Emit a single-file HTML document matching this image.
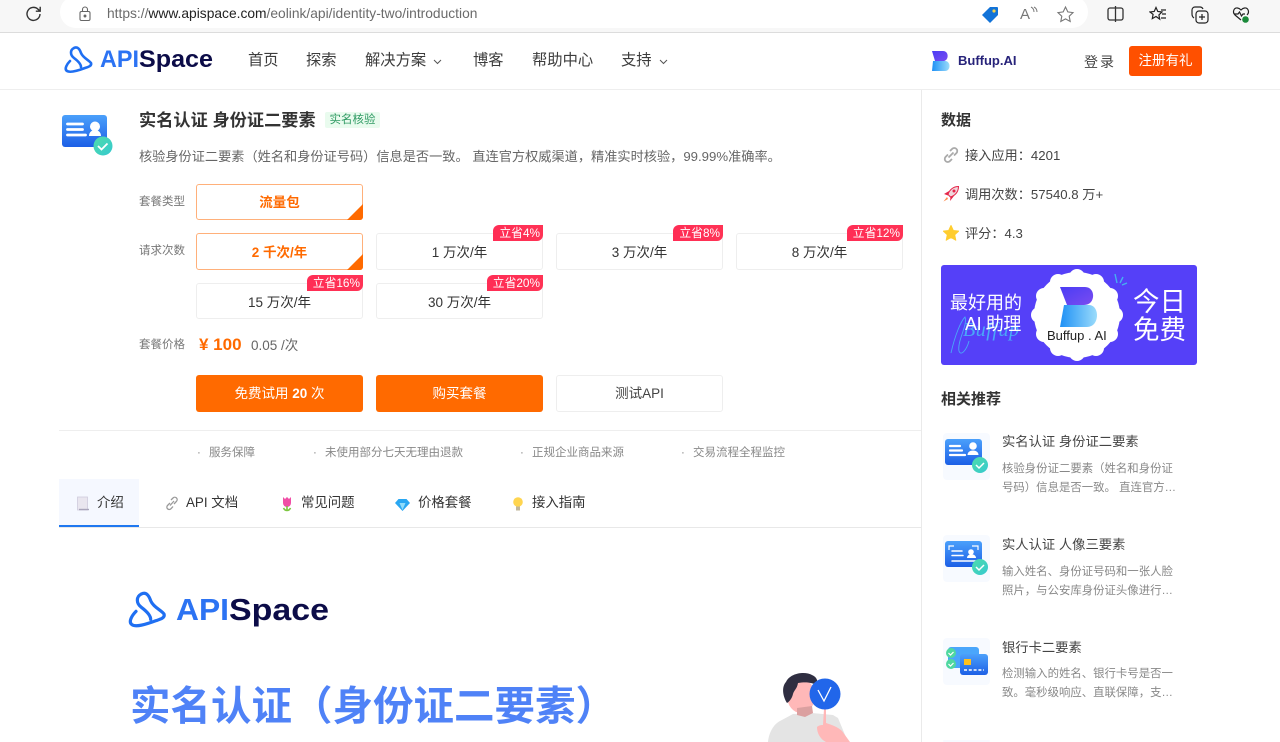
<!DOCTYPE html>
<html lang="zh-CN"><head><meta charset="utf-8"><title>APISpace</title>
<style>
html,body{margin:0;padding:0;background:#fff;height:742px;overflow:hidden}
body{width:1280px;position:relative;font-family:"Liberation Sans","Noto Sans CJK SC",sans-serif;color:#333}
.a,.t,.o,.b,.bd,svg{position:absolute}
.t{white-space:nowrap;line-height:20px}
.nav{font-size:15.3px;color:#3c3c3c;top:51px}
.lab{font-size:11.5px;color:#777;left:139px}
.o{box-sizing:border-box;width:167px;height:37px;border:1px solid #eee;border-radius:3px;text-align:center;font-size:13.5px;line-height:37px;color:#333;background:#fff}
.o.s{border-color:#ffb07a;color:#ff6a00;font-weight:bold}
.o.s:after{content:"";position:absolute;right:-1px;bottom:-1px;border-style:solid;border-width:0 0 16px 16px;border-color:transparent transparent #ff6a00 transparent;border-bottom-right-radius:3px}
.bd{right:-1px;top:-9px;height:16px;line-height:16px;padding:0 3px 0 6px;font-size:11.8px;font-weight:normal;color:#fff;background:linear-gradient(90deg,#ff2d55,#ff3355);border-radius:6px 0 6px 0}
.b{box-sizing:border-box;top:375px;width:167px;height:37px;border-radius:3px;text-align:center;font-size:13.5px;line-height:37px;background:#ff6a00;color:#fff}
.sv{font-size:11.5px;color:#888;top:443px}
.tab{font-size:13.4px;color:#333;top:493px}
.st{font-size:13.2px;color:#444;left:965px}
.ct{font-size:13.3px;color:#444;left:1002px}
.cd{font-size:11.4px;color:#888;left:1002px}
.ib{position:absolute;left:943px;width:47px;height:47px;background:#f7faff;border-radius:4px}
</style></head><body>

<!-- browser chrome -->
<div class="a" style="left:0;top:0;width:1280px;height:32px;background:#f7f7f7;border-bottom:1px solid #dcdcdc"></div>
<div class="a" style="left:60px;top:-4px;width:1028px;height:32px;background:#fff;border-radius:16px"></div>
<svg style="left:24px;top:4px" width="20" height="20" viewBox="0 0 20 20" fill="none" stroke="#333" stroke-width="1.4"><path d="M16 10a6.5 6.5 0 1 1-2-4.8L16 7"/><path d="M16.2 2.800V7.200H11.800"/></svg>
<svg style="left:78px;top:6px" width="14" height="16" viewBox="0 0 14 16" fill="none" stroke="#666" stroke-width="1.1"><rect x="2" y="5.500" width="10" height="9" rx="1.500"/><path d="M4.500 5.500V3.500a2.500 2.500 0 0 1 5 0v2"/><circle cx="7" cy="10" r=".9" fill="#666"/></svg>
<div class="t" style="left:107px;top:4px;font-size:13.8px;color:#6b6b6b">https://<span style="color:#222">www.apispace.com</span>/eolink/api/identity-two/introduction</div>
<svg style="left:981px;top:6px" width="18" height="18" viewBox="0 0 18 18"><path d="M9 1h7a1 1 0 0 1 1 1v7l-8 8-8-8z" fill="#1273d8"/><circle cx="13" cy="5" r="1.600" fill="#f6d24a"/></svg>
<div class="t" style="left:1020px;top:5px;font-size:15px;color:#777">A</div>
<svg style="left:1030px;top:6px" width="8" height="10" viewBox="0 0 8 10" fill="none" stroke="#777"><path d="M1 1c2 1 3 3 3 5M4 1c2 1 3 3 3 5"/></svg>
<svg style="left:1056px;top:5px" width="19" height="19" viewBox="0 0 19 19" fill="none" stroke="#777" stroke-width="1.1"><path d="M9.500 2l2.300 4.900 5.200.7-3.800 3.600 1 5.300-4.700-2.600-4.700 2.600 1-5.300L2 7.600l5.200-.7z"/></svg>
<svg style="left:1107px;top:6px" width="17" height="16" viewBox="0 0 17 16" fill="none" stroke="#333" stroke-width="1.300"><rect x="1" y="2" width="15" height="12" rx="2"/><path d="M8.500 0v16"/></svg>
<svg style="left:1149px;top:6px" width="18" height="17" viewBox="0 0 18 17" fill="none" stroke="#222" stroke-width="1.200"><path d="M7 1.500l1.800 4 4.200.5-3.100 2.900.8 4.200L7 10.500l-3.700 2.100.8-4.200L1 6l4.200-.5z"/><path d="M12 4h5M13 8h4M12 12h5"/></svg>
<svg style="left:1191px;top:6px" width="18" height="18" viewBox="0 0 18 18" fill="none" stroke="#222" stroke-width="1.200"><rect x="5" y="5" width="12" height="12" rx="3"/><path d="M11 8v6M8 11h6M3 12C1.500 11 1 10 1 8V4a3 3 0 0 1 3-3h5c1.500 0 2.500 1 3 2"/></svg>
<svg style="left:1232px;top:6px" width="18" height="18" viewBox="0 0 18 18" fill="none" stroke="#222" stroke-width="1.200"><path d="M9 14L3 9C0 6 2 1.500 5.500 2 7 2.200 8 3 9 4c1-1 2-1.800 3.500-2 3.500-.5 5.500 4 2.500 7"/><path d="M2 8h4l1.500-2 2 4 1.500-2h2"/><circle cx="13.500" cy="13.500" r="3.300" fill="#1b8a3a" stroke="none"/></svg>

<!-- header -->
<div class="a" style="left:0;top:89px;width:1280px;height:1px;background:#eee"></div>
<svg style="left:64px;top:45px" width="30" height="30" viewBox="0 0 30 30" fill="none" stroke="#1f6ff2" stroke-width="2.600" stroke-linecap="round" stroke-linejoin="round"><path d="M10 3C14 1 16 5 17 8C19 13 25 15 27 18C28 21 24 22 21 23C13 26 6 28 3 26C0 24 3 19 6 16"/><path d="M10 3C6 5 6 10 10 13C14 16 17 19 17 22"/></svg>
<svg style="left:98px;top:42px" width="120" height="36"><text x="2" y="25" font-family="Liberation Sans" font-weight="bold" font-size="24" textLength="39" lengthAdjust="spacingAndGlyphs" fill="#2c73f3">API</text><text x="41" y="25" font-family="Liberation Sans" font-weight="bold" font-size="24" textLength="74" lengthAdjust="spacingAndGlyphs" fill="#0c0c48">Space</text></svg>
<div class="t nav" style="left:248px">首页</div>
<div class="t nav" style="left:306px">探索</div>
<div class="t nav" style="left:365px">解决方案</div>
<svg style="left:433px;top:59px" width="9" height="6" fill="none" stroke="#555" stroke-width="1"><path d="M1 1l3.500 3.500L8 1"/></svg>
<div class="t nav" style="left:473px">博客</div>
<div class="t nav" style="left:532px">帮助中心</div>
<div class="t nav" style="left:621px">支持</div>
<svg style="left:659px;top:59px" width="9" height="6" fill="none" stroke="#555" stroke-width="1"><path d="M1 1l3.500 3.500L8 1"/></svg>
<svg style="left:931px;top:50px" width="20" height="22" viewBox="0 0 20 22"><defs><linearGradient id="g1" x1="0" y1="0" x2="1" y2="1"><stop offset="0" stop-color="#4a3cf5"/><stop offset="1" stop-color="#7a4cf0"/></linearGradient><linearGradient id="g2" x1="0" y1="0" x2="1" y2="0"><stop offset="0" stop-color="#1e90f5"/><stop offset="1" stop-color="#9bdcfb"/></linearGradient></defs><path d="M2 11H14c6 0 6 10 0 10H1z" fill="url(#g2)"/><path d="M1 1H12c6 0 6 9 1 10H4z" fill="url(#g1)"/></svg>
<div class="t" style="left:958px;top:51px;font-size:13px;font-weight:bold;color:#27237a">Buffup.AI</div>
<div class="t" style="left:1084px;top:52px;font-size:14px;letter-spacing:2px;color:#444">登录</div>
<div class="a" style="left:1129px;top:46px;width:73px;height:30px;background:#ff5000;border-radius:3px;color:#fff;font-size:13.500px;line-height:30px;text-align:center">注册有礼</div>

<!-- main head -->
<svg style="left:60px;top:113px" width="54" height="44" viewBox="0 0 54 44"><defs><linearGradient id="g3" x1="0" y1="0" x2="0" y2="1"><stop offset="0" stop-color="#4ba0fb"/><stop offset="1" stop-color="#1c5fe6"/></linearGradient><linearGradient id="g4" x1="0" y1="0" x2="1" y2="1"><stop offset="0" stop-color="#4fdcaa"/><stop offset="1" stop-color="#35c9d0"/></linearGradient></defs><rect x="2" y="2" width="45" height="32" rx="3" fill="url(#g3)"/><path d="M7.500 11h15M7.500 16.500h15M7.500 22h18" stroke="#fff" stroke-width="2.800" stroke-linecap="round"/><circle cx="35" cy="13.500" r="5" fill="#fff"/><path d="M29 23c0-8 12-8 12 0z" fill="#fff"/><circle cx="43" cy="33" r="9.500" fill="url(#g4)"/><path d="M38 33l3.500 3.500 6-6" fill="none" stroke="#fff" stroke-width="1.800"/></svg>
<div class="t" style="left:139px;top:110px;font-size:17.2px;font-weight:bold;color:#333">实名认证 身份证二要素</div>
<div class="a" style="left:325px;top:112px;width:55px;height:16px;background:#e9fbee;border-radius:2px;color:#2f9a63;font-size:11.500px;line-height:16px;text-align:center">实名核验</div>
<div class="t" style="left:139px;top:147px;font-size:13.2px;color:#666">核验身份证二要素（姓名和身份证号码）信息是否一致。 直连官方权威渠道，精准实时核验，99.99%准确率。</div>

<div class="t lab" style="top:192px">套餐类型</div>
<div class="o s" style="left:196px;top:184px;height:36px;line-height:36px">流量包</div>
<div class="t lab" style="top:241px">请求次数</div>
<div class="o s" style="left:196px;top:233px;line-height:38px">2 千次/年</div>
<div class="o" style="left:376px;top:233px;line-height:38px">1 万次/年<span class="bd">立省4%</span></div>
<div class="o" style="left:556px;top:233px;line-height:38px">3 万次/年<span class="bd">立省8%</span></div>
<div class="o" style="left:736px;top:233px;line-height:38px">8 万次/年<span class="bd">立省12%</span></div>
<div class="o" style="left:196px;top:283px;height:36px">15 万次/年<span class="bd">立省16%</span></div>
<div class="o" style="left:376px;top:283px;height:36px">30 万次/年<span class="bd">立省20%</span></div>

<div class="t lab" style="top:335px">套餐价格</div>
<div class="t" style="left:199px;top:335px;font-size:17px;font-weight:bold;color:#ff6a00">¥ 100</div>
<div class="t" style="left:251px;top:336px;font-size:13.500px;color:#666">0.05 /次</div>
<div class="b" style="left:196px">免费试用 <b>20</b> 次</div>
<div class="b" style="left:376px">购买套餐</div>
<div class="b" style="left:556px;background:#fff;border:1px solid #eee;color:#444;line-height:36px">测试API</div>

<div class="a" style="left:59px;top:430px;width:862px;height:1px;background:#eee"></div>
<div class="t sv" style="left:197px">·</div><div class="t sv" style="left:209px">服务保障</div>
<div class="t sv" style="left:313px">·</div><div class="t sv" style="left:325px">未使用部分七天无理由退款</div>
<div class="t sv" style="left:520px">·</div><div class="t sv" style="left:532px">正规企业商品来源</div>
<div class="t sv" style="left:681px">·</div><div class="t sv" style="left:693px">交易流程全程监控</div>

<!-- tabs -->
<div class="a" style="left:59px;top:527px;width:862px;height:1px;background:#e8e8e8"></div>
<div class="a" style="left:59px;top:479px;width:80px;height:46px;background:#f5f8ff;border-bottom:2px solid #1f78f0"></div>
<svg style="left:76px;top:496px" width="14" height="16" viewBox="0 0 14 16"><rect x="1.500" y="1" width="10" height="13" fill="#e9e6ef" stroke="#cfcbdc" stroke-width=".8"/><path d="M3 13.500h10" stroke="#a9a5bb" stroke-width="1.400"/></svg>
<div class="t tab" style="left:97px">介绍</div>
<svg style="left:165px;top:496px" width="14" height="15" viewBox="0 0 14 15" fill="none" stroke="#999" stroke-width="1.300"><path d="M6 4l2-2a2.300 2.300 0 0 1 3.500 3.300L9 8M8 10.500l-2 2.200A2.300 2.300 0 0 1 2.500 9.500L5 7"/><path d="M5 9.500L9 5"/></svg>
<div class="t tab" style="left:186px">API 文档</div>
<svg style="left:281px;top:496px" width="12" height="16" viewBox="0 0 12 16"><path d="M2 1l2 2 2-2 2 2 2-2v6a4 4 0 0 1-8 0z" fill="#f04ea6"/><path d="M6 10v5M2.500 12c1 2 2.500 2.500 3.500 2.500s2.500-.5 3.500-2.500" stroke="#7cc63f" stroke-width="1.600" fill="none"/></svg>
<div class="t tab" style="left:301px">常见问题</div>
<svg style="left:395px;top:498px" width="15" height="13" viewBox="0 0 15 13"><path d="M3.500 1h8L15 5l-7.500 8L0 5z" fill="#29a7f2"/><path d="M4.500 5h6L7.500 12z" fill="#8fdcfb"/></svg>
<div class="t tab" style="left:418px">价格套餐</div>
<svg style="left:512px;top:496px" width="12" height="16" viewBox="0 0 12 16"><circle cx="6" cy="6" r="4.800" fill="#ffd54f"/><rect x="4" y="10.500" width="4" height="4" fill="#c2b79b"/></svg>
<div class="t tab" style="left:532px">接入指南</div>

<!-- hero -->
<svg style="left:128px;top:590px" width="40" height="40" viewBox="0 0 30 30" fill="none" stroke="#1f6ff2" stroke-width="2.400" stroke-linecap="round" stroke-linejoin="round"><path d="M10 3C14 1 16 5 17 8C19 13 25 15 27 18C28 21 24 22 21 23C13 26 6 28 3 26C0 24 3 19 6 16"/><path d="M10 3C6 5 6 10 10 13C14 16 17 19 17 22"/></svg>
<svg style="left:174px;top:586px" width="160" height="46"><text x="2" y="34" font-family="Liberation Sans" font-weight="bold" font-size="31" textLength="53" lengthAdjust="spacingAndGlyphs" fill="#2c73f3">API</text><text x="55" y="34" font-family="Liberation Sans" font-weight="bold" font-size="31" textLength="100" lengthAdjust="spacingAndGlyphs" fill="#0c0c48">Space</text></svg>
<div class="t" style="left:130px;top:681px;font-size:40.5px;line-height:50px;font-weight:bold;color:#4f82f7">实名认证（身份证二要素）</div>
<svg style="left:760px;top:665px" width="100" height="77" viewBox="0 0 100 77"><path d="M8 77c1-10 6-18 12-21l13-7 19-1 21 2 5 3 10 24z" fill="#e4e4e4"/><ellipse cx="41" cy="31" rx="14" ry="17" fill="#ffb8b8"/><path d="M37 43l15-2 1 7-8 4-8-2z" fill="#dba0a0"/><path d="M27 38C22 30 22 21 26 17C30 8 45 6 52 10C57 12 58 16 57 20C50 17 45 17 38 18C37 24 34 25 33 29C32 33 30 36 27 38z" fill="#2f2e41"/><path d="M64 44h2l0 14C72 60 78 62 82 66L90 77H66C60 74 57 68 57 62C59 60 62 60 63 60z" fill="#ffb8b8"/><circle cx="65" cy="29" r="15.500" fill="#2166ea"/><path d="M58 25l6 11 7-14" fill="none" stroke="#fff" stroke-width="1.300"/></svg>

<!-- sidebar -->
<div class="a" style="left:921px;top:90px;width:1px;height:652px;background:#eaeaea"></div>
<div class="t" style="left:941px;top:111px;font-size:15px;font-weight:bold;color:#333">数据</div>
<svg style="left:943px;top:147px" width="16" height="16" viewBox="0 0 16 16" fill="none" stroke="#aaa" stroke-width="1.800"><path d="M7 4l2-2a2.800 2.800 0 0 1 4.500 4L11 8.500M9 12l-2 2A2.800 2.800 0 0 1 2.500 10L5 7.500"/><path d="M5.500 10.500L10.500 5.500"/></svg>
<div class="t st" style="top:146px">接入应用：4201</div>
<svg style="left:943px;top:186px" width="16" height="16" viewBox="0 0 16 16"><path d="M15.500.5c-5 0-9 3-10.500 8l2.500 2.500c5-1.500 8-5.500 8-10.500z" fill="#f0d6dc" stroke="#e5264a" stroke-width="1"/><circle cx="11" cy="5" r="1.500" fill="#e5264a"/><path d="M6 5L1 8l4 1.500zM11 10l-4 5 .5-4z" fill="#e5264a"/><path d="M4 11l-3.500 4.500L5 13z" fill="#ff8a4c"/></svg>
<div class="t st" style="top:185px">调用次数：57540.8 万+</div>
<svg style="left:943px;top:225px" width="16" height="16" viewBox="0 0 16 16"><path d="M8 .5l2.300 5 5.400.6-4 3.700 1.100 5.400L8 12.500l-4.800 2.700 1.100-5.400-4-3.700 5.400-.6z" fill="#ffcd2f" stroke="#ffcd2f" stroke-linejoin="round"/></svg>
<div class="t st" style="top:224px">评分：4.3</div>

<!-- banner -->
<div class="a" style="left:941px;top:265px;width:256px;height:100px;background:#5540f8;border-radius:3px;overflow:hidden">
<svg style="left:0;top:0" width="256" height="100" viewBox="0 0 256 100"><defs><linearGradient id="g5" x1="0" y1="0" x2="1" y2="1"><stop offset="0" stop-color="#4a3cf5"/><stop offset="1" stop-color="#7a4cf0"/></linearGradient><linearGradient id="g6" x1="0" y1="0" x2="1" y2="0"><stop offset="0" stop-color="#1e90f5"/><stop offset="1" stop-color="#9bdcfb"/></linearGradient></defs>
<circle cx="136" cy="50" r="43" fill="#fff"/>
<g fill="#fff"><circle cx="136" cy="12" r="8"/><circle cx="155" cy="17" r="8"/><circle cx="169" cy="31" r="8"/><circle cx="174" cy="50" r="8"/><circle cx="169" cy="69" r="8"/><circle cx="155" cy="83" r="8"/><circle cx="136" cy="88" r="8"/><circle cx="117" cy="83" r="8"/><circle cx="103" cy="69" r="8"/><circle cx="98" cy="50" r="8"/><circle cx="103" cy="31" r="8"/><circle cx="117" cy="17" r="8"/></g>
<path d="M123 40H148c11 0 11 22-2 22H119z" fill="url(#g6)"/><path d="M119 22H144c11 0 11 18-1 18H126z" fill="url(#g5)"/>
<path d="M176 18l-2-9M179 18l3-6M181 20l5-2" stroke="#45b0f0" stroke-width="1.400"/>
<path d="M10 88c4-18 10-32 14-36 3 8-8 24-6 34 2 6 8-2 10-10" fill="none" stroke="#4aa8f8" stroke-width=".9"/>
<text x="22" y="71" font-family="Liberation Serif" font-style="italic" font-size="20" fill="#4aa8f8" textLength="56">Buffup</text>
</svg>
<div class="t" style="left:9px;top:27px;font-size:18px;line-height:22px;color:#fff">最好用的</div>
<div class="t" style="left:24px;top:48px;font-size:18px;line-height:22px;color:#fff;letter-spacing:-.4px">AI 助理</div>
<div class="t" style="left:192px;top:21px;font-size:26.500px;line-height:32px;color:#fff">今日</div>
<div class="t" style="left:192px;top:49px;font-size:26.500px;line-height:32px;color:#fff">免费</div>
<div class="t" style="left:106px;top:61px;font-size:13px;color:#222">Buffup . AI</div>
</div>

<div class="t" style="left:941px;top:390px;font-size:15px;font-weight:bold;color:#333">相关推荐</div>

<!-- card 1 -->
<div class="ib" style="top:433px"></div>
<svg style="left:943px;top:433px" width="47" height="47" viewBox="0 0 47 47"><rect x="2" y="6" width="37" height="26" rx="3" fill="url(#g3)"/><path d="M7 13h10M7 17.500h12M7 22h15" stroke="#fff" stroke-width="2.200" stroke-linecap="round"/><circle cx="30" cy="13" r="3.800" fill="#fff"/><path d="M24.500 22c0-6 11-6 11 0z" fill="#fff"/><circle cx="37" cy="32" r="8" fill="url(#g4)"/><path d="M33 32l3 3 5-5" fill="none" stroke="#fff" stroke-width="1.500"/></svg>
<div class="t ct" style="top:432px">实名认证 身份证二要素</div>
<div class="t cd" style="top:459px">核验身份证二要素（姓名和身份证</div>
<div class="t cd" style="top:478px">号码）信息是否一致。 直连官方…</div>
<!-- card 2 -->
<div class="ib" style="top:535px"></div>
<svg style="left:943px;top:535px" width="47" height="47" viewBox="0 0 47 47"><rect x="2" y="6" width="37" height="26" rx="3" fill="url(#g3)"/><path d="M11 11H6v4M29 11h6v4" fill="none" stroke="#fff" stroke-width="1.200"/><path d="M9 16h10M9 20.500h11M9 26h25" stroke="#fff" stroke-width="1.500" stroke-linecap="round"/><circle cx="28" cy="17" r="2.800" fill="#fff"/><path d="M24 23c0-5 9-5 9 0z" fill="#fff"/><circle cx="37" cy="32" r="8" fill="url(#g4)"/><path d="M33 32l3 3 5-5" fill="none" stroke="#fff" stroke-width="1.500"/></svg>
<div class="t ct" style="top:535px">实人认证 人像三要素</div>
<div class="t cd" style="top:562px">输入姓名、身份证号码和一张人脸</div>
<div class="t cd" style="top:581px">照片，与公安库身份证头像进行…</div>
<!-- card 3 -->
<div class="ib" style="top:638px"></div>
<svg style="left:943px;top:638px" width="47" height="47" viewBox="0 0 47 47"><rect x="5" y="9" width="31" height="21" rx="3" fill="#4aa6fb"/><rect x="17" y="16" width="28" height="21" rx="3" fill="url(#g3)"/><rect x="21" y="21" width="7" height="6" fill="#ffc01e"/><path d="M21 32h20" stroke="#fff" stroke-width="1.500" stroke-dasharray="3 1.800"/><circle cx="8" cy="15" r="5" fill="#4fd8a0"/><circle cx="8" cy="26" r="5" fill="#4fd8a0"/><path d="M5.500 15l2 2 3-3M5.500 26l2 2 3-3" fill="none" stroke="#fff" stroke-width="1.200"/></svg>
<div class="t ct" style="top:638px">银行卡二要素</div>
<div class="t cd" style="top:664px">检测输入的姓名、银行卡号是否一</div>
<div class="t cd" style="top:683px">致。毫秒级响应、直联保障，支…</div>
<div class="ib" style="top:740px;height:2px"></div>
</body></html>
